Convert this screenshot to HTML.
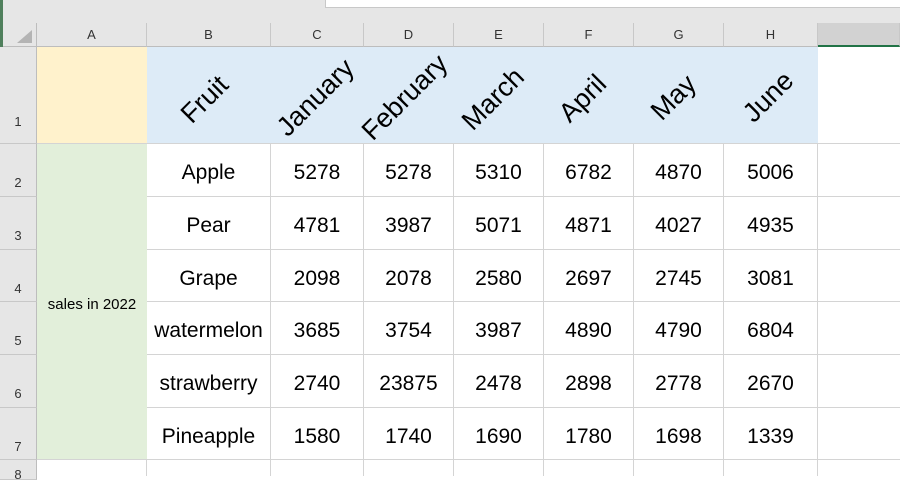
<!DOCTYPE html>
<html><head><style>
*{margin:0;padding:0;box-sizing:border-box}
body{width:900px;height:476px;overflow:hidden;background:#fff;font-family:"Liberation Sans",sans-serif;position:relative;color:#000}
.a{position:absolute}
.ch{position:absolute;top:23px;height:24px;background:#e6e6e6;border-right:1px solid #c8c8c8;border-bottom:1px solid #bdbdbd;font-size:13px;color:#333;text-align:center;line-height:24px}
.rh{position:absolute;left:0;width:37px;background:#e6e6e6;border-bottom:1px solid #c8c8c8;border-right:1px solid #bdbdbd;font-size:13px;color:#333;text-align:center}
.c{position:absolute;border-right:1px solid #d4d4d4;border-bottom:1px solid #d4d4d4;font-size:21px;text-align:center;display:flex;align-items:center;justify-content:center;padding-top:6px}
.rot{position:absolute;font-size:27px;line-height:30px;white-space:nowrap;transform-origin:left bottom;transform:rotate(-45deg)}
</style></head><body>
<div class="a" style="left:0;top:0;width:900px;height:23px;background:#e6e6e6"></div>
<div class="a" style="left:325px;top:0;width:580px;height:8px;background:#fff;border:1px solid #c8c8c8;border-top:none"></div>
<div class="a" style="left:0;top:23px;width:37px;height:24px;background:#e6e6e6;border-right:1px solid #bdbdbd;border-bottom:1px solid #bdbdbd"></div>
<div class="a" style="left:17px;top:30px;width:0;height:0;border-left:15px solid transparent;border-bottom:13px solid #b4b4b4"></div>
<div class="a" style="left:0;top:0;width:3px;height:476px;background:#4f7f5c"></div>
<div class="ch" style="left:37px;width:110px">A</div>
<div class="ch" style="left:147px;width:124px">B</div>
<div class="ch" style="left:271px;width:93px">C</div>
<div class="ch" style="left:364px;width:90px">D</div>
<div class="ch" style="left:454px;width:90px">E</div>
<div class="ch" style="left:544px;width:90px">F</div>
<div class="ch" style="left:634px;width:90px">G</div>
<div class="ch" style="left:724px;width:94px">H</div>
<div class="ch" style="left:818px;width:82px;background:#d2d2d2;border-bottom:2px solid #217346"></div>
<div class="rh" style="top:47px;height:97px;line-height:150px">1</div>
<div class="rh" style="top:144px;height:53px;line-height:78px">2</div>
<div class="rh" style="top:197px;height:53px;line-height:78px">3</div>
<div class="rh" style="top:250px;height:52px;line-height:78px">4</div>
<div class="rh" style="top:302px;height:53px;line-height:78px">5</div>
<div class="rh" style="top:355px;height:53px;line-height:78px">6</div>
<div class="rh" style="top:408px;height:52px;line-height:78px">7</div>
<div class="rh" style="top:460px;height:20px;line-height:30px">8</div>
<div class="a" style="left:37px;top:47px;width:110px;height:97px;background:#fff2cc;border-bottom:1px solid #d4d4d4"></div>
<div class="a" style="left:147px;top:47px;width:671px;height:97px;background:#ddebf7;border-bottom:1px solid #d4d4d4"></div>
<div class="a" style="left:818px;top:47px;width:82px;height:97px;border-bottom:1px solid #d4d4d4"></div>
<div class="a" style="left:37px;top:144px;width:110px;height:316px;background:#e2efda;border-bottom:1px solid #d4d4d4;font-size:15px;display:flex;align-items:center;justify-content:center;padding-top:6px">sales in 2022</div>
<div class="rot" style="left:196px;top:99px">Fruit</div>
<div class="rot" style="left:292px;top:112px">January</div>
<div class="rot" style="left:377px;top:116px">February</div>
<div class="rot" style="left:477px;top:106px">March</div>
<div class="rot" style="left:574px;top:98px">April</div>
<div class="rot" style="left:666px;top:96px">May</div>
<div class="rot" style="left:758px;top:98px">June</div>
<div id="g"></div>
<script>
var xs=[147,271,364,454,544,634,724,818,900];
var ys=[144,197,250,302,355,408,460,476];
var d=[["Apple",5278,5278,5310,6782,4870,5006],["Pear",4781,3987,5071,4871,4027,4935],["Grape",2098,2078,2580,2697,2745,3081],["watermelon",3685,3754,3987,4890,4790,6804],["strawberry",2740,23875,2478,2898,2778,2670],["Pineapple",1580,1740,1690,1780,1698,1339],["","","","","","",""]];
var h="";
for(var r=0;r<7;r++)for(var c=0;c<8;c++){var t=c<7?d[r][c]:"";
var bb=r==6?"border-bottom:none;":"";var br=c==7?"border-right:none;":"";
h+='<div class="c" style="'+bb+br+'left:'+xs[c]+'px;top:'+ys[r]+'px;width:'+(xs[c+1]-xs[c])+'px;height:'+(ys[r+1]-ys[r])+'px">'+t+'</div>';}
document.getElementById("g").innerHTML=h;
</script>
<div class="a" style="left:37px;top:460px;width:110px;height:16px;border-right:1px solid #d4d4d4"></div>
</body></html>
